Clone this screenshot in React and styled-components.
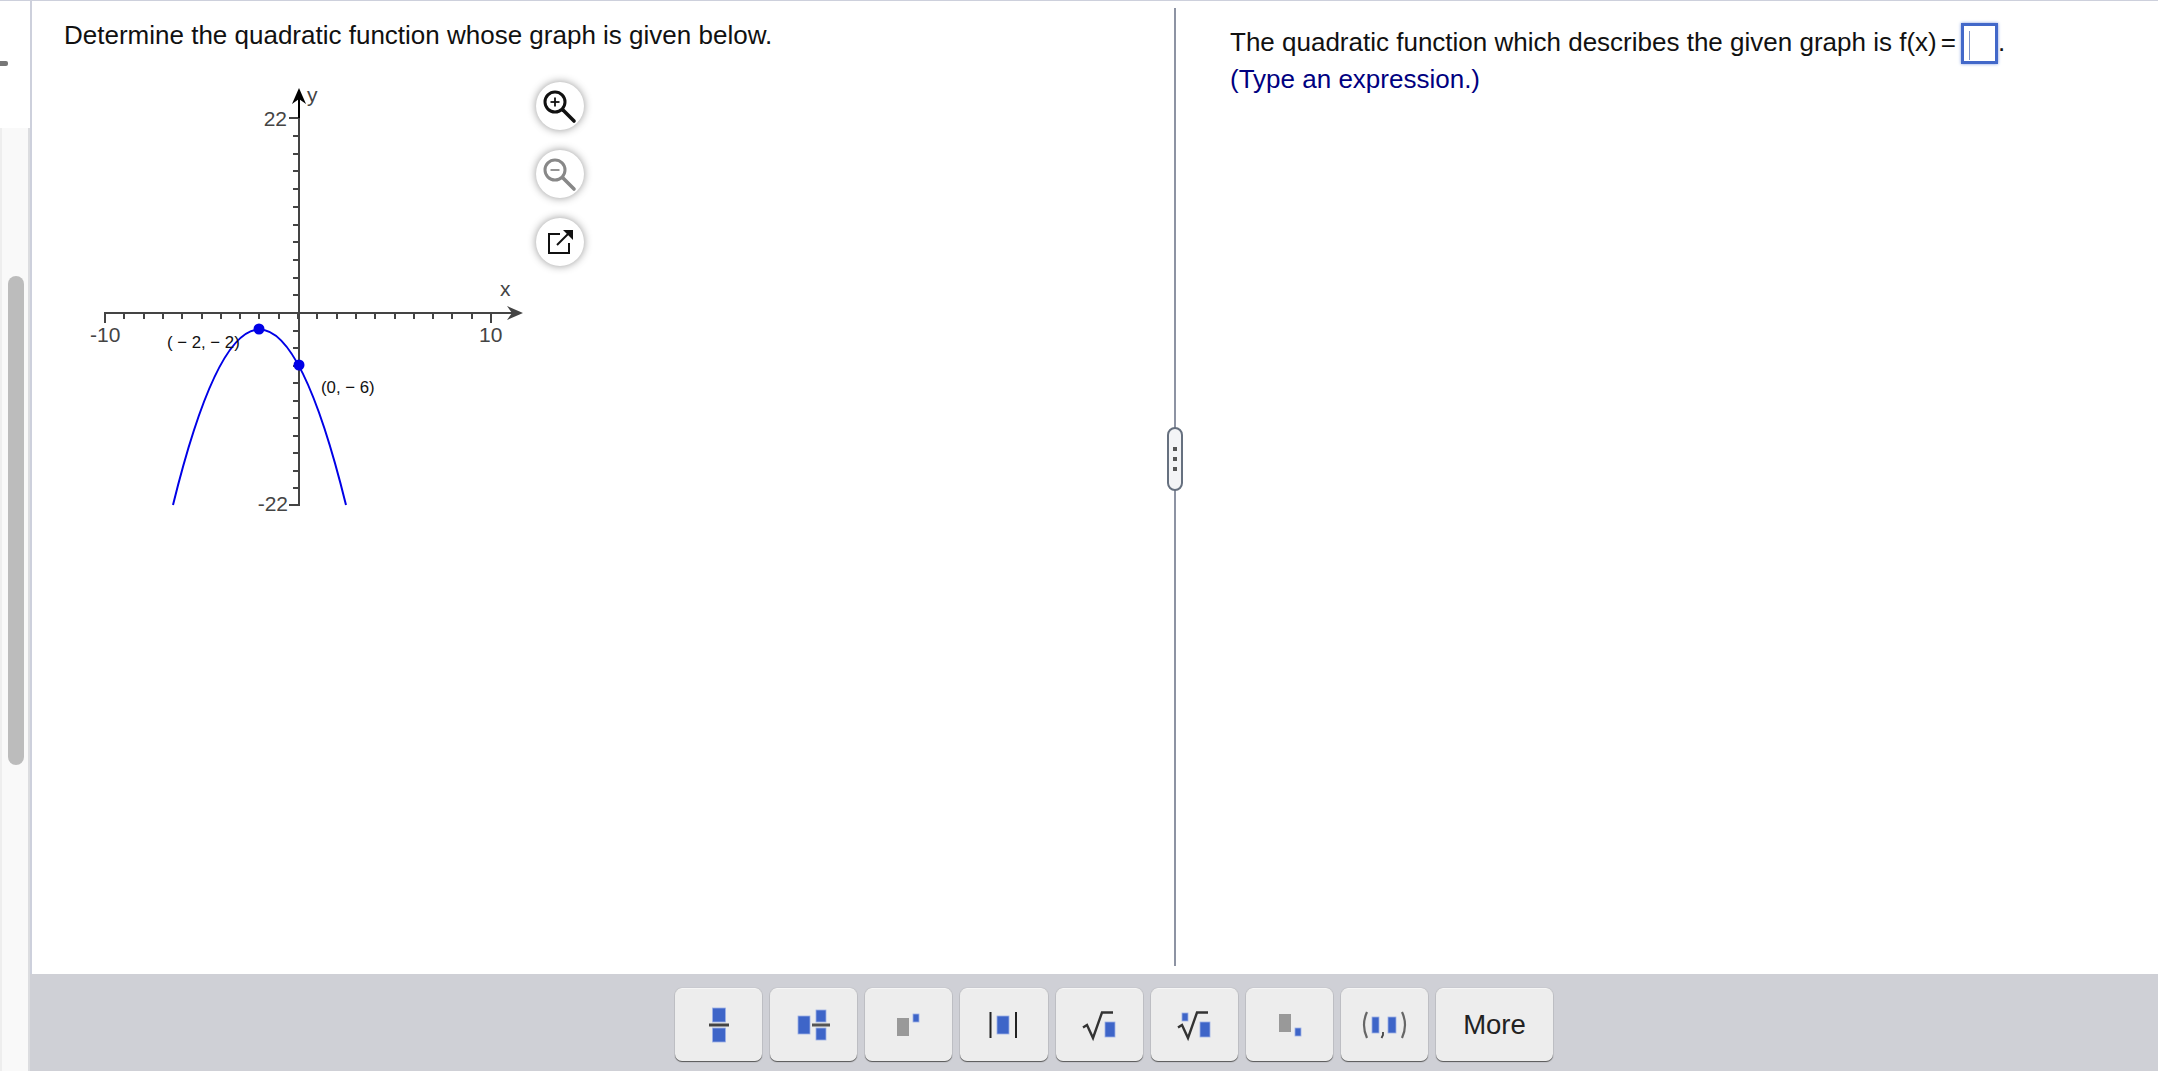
import React from "react";
import styled, { createGlobalStyle } from "styled-components";

const Global = createGlobalStyle`
  html, body { margin: 0; padding: 0; height: 100%; background: #fff; overflow: hidden; }
  #root { height: 100%; }
  * { box-sizing: border-box; }
`;

const Page = styled.div`
  display: flex;
  height: 1071px;
  width: 2158px;
  font-family: "Liberation Sans", Arial, sans-serif;
  color: #111;
`;
const Rail = styled.aside`
  width: 32px;
  flex: none;
  display: flex;
  flex-direction: column;
  border-right: 2px solid #cdd0dc;
`;
const RailHead = styled.div`
  height: 128px;
  flex: none;
  border-top: 1px solid #cdd0dc;
  padding-top: 60px;
`;
const Dash = styled.div`
  width: 8px;
  height: 5px;
  background: #777;
  border-radius: 0 2px 2px 0;
  filter: blur(0.5px);
`;
const Track = styled.div`
  flex: 1;
  background: #f9f9f9;
  border-left: 2px solid #eee;
  border-right: 2px solid #dcdde0;
  padding: 148px 0 0 6px;
`;
const Thumb = styled.div`
  width: 16px;
  height: 489px;
  border-radius: 8px;
  background: #bcbcbc;
`;
const Main = styled.main`
  flex: 1;
  min-width: 0;
  display: flex;
  flex-direction: column;
  border-top: 1px solid #cdd0dc;
`;
const Panes = styled.div`
  flex: 1;
  min-height: 0;
  display: flex;
  padding-top: 7px;
  padding-bottom: 8px;
`;
const LeftPane = styled.section`
  width: 1142px;
  flex: none;
  padding-left: 32px;
`;
const Question = styled.p`
  margin: 11px 0 0;
  font-size: 26px;
  line-height: 32px;
  color: #111;
`;
const GraphRow = styled.div`
  display: flex;
  margin-top: 23px;
`;
const Graph = styled.svg`
  display: block;
  width: 472px;
  height: 446px;
  flex: none;
`;
const Tools = styled.div`
  display: flex;
  flex-direction: column;
  gap: 20px;
  margin-top: 8px;
`;
const RoundTool = styled.button`
  width: 48px;
  height: 48px;
  padding: 0;
  border: 0;
  border-radius: 50%;
  background: #fff;
  box-shadow: 0 0 9px rgba(0, 0, 0, 0.42);
  display: flex;
  svg { display: block; }
`;
const Divider = styled.div`
  width: 2px;
  flex: none;
  background: #8d93a3;
  position: relative;
`;
const Handle = styled.div`
  position: absolute;
  left: -7px;
  top: 419px;
  width: 16px;
  height: 64px;
  border: 2px solid #66707f;
  border-radius: 8px;
  background: #f3f4f6;
  display: flex;
  flex-direction: column;
  align-items: center;
  justify-content: center;
  gap: 6px;
`;
const Dot = styled.span`
  width: 4px;
  height: 4px;
  background: #555;
`;
const RightPane = styled.section`
  flex: 1;
  padding: 13px 0 0 54px;
`;
const Statement = styled.p`
  margin: 0;
  font-size: 26px;
  line-height: 37px;
  display: flex;
  align-items: center;
`;
const Equals = styled.span`
  margin-left: 4px;
`;
const AnswerBox = styled.span`
  width: 37px;
  height: 41px;
  margin: 2px 0 0 5px;
  border: 3px solid #4268c9;
  box-shadow: 0 0 3px #7f9ae0;
  background: #fff;
  padding: 5px 0 0 5px;
  display: block;
`;
const Caret = styled.span`
  display: block;
  width: 1px;
  height: 29px;
  background: #7f94c8;
`;
const Hint = styled.p`
  margin: -3px 0 0;
  font-size: 26px;
  line-height: 37px;
  color: #000080;
`;
const Toolbar = styled.footer`
  height: 97px;
  flex: none;
  background: #cfd0d6;
  margin-left: -2px;
  padding: 14px 0 0 645px;
  display: flex;
  gap: 8px;
`;
const KeyButton = styled.button`
  width: ${(p) => p.$w || 87.125}px;
  height: 73px;
  padding: 0;
  border: 0;
  border-top: 1px solid #f6f6f6;
  border-radius: 7px;
  background: #ededed;
  box-shadow: 0 1px 1px #555, 0 0 1px rgba(0, 0, 0, 0.3);
  font-family: "Liberation Sans", Arial, sans-serif;
  font-size: 27.5px;
  color: #222;
  svg { display: block; margin-top: -1px; }
`;

const BLUE = "#3e65c8";
const Blue = (p) => <rect fill={BLUE} stroke="#9db1e6" strokeWidth="0.8" {...p} />;

const Icon = ({ children }) => (
  <svg width="87" height="73" viewBox="0 0 87 73">{children}</svg>
);

const Radical = () => (
  <path d="M27 39.5 L31 37 L37 50 L46 24.5 H57" fill="none" stroke="#333" strokeWidth="2.4" />
);

const icons = [
  <Icon key="f">
    <Blue x="37.5" y="20" width="13" height="14" />
    <rect x="34" y="35.5" width="20" height="3" fill="#444" />
    <Blue x="37.5" y="40" width="13" height="14" />
  </Icon>,
  <Icon key="m">
    <Blue x="28" y="28" width="12" height="18" />
    <Blue x="46" y="22" width="10" height="12" />
    <rect x="42" y="35.5" width="18" height="3" fill="#555" />
    <Blue x="46" y="40" width="10" height="12" />
  </Icon>,
  <Icon key="p">
    <rect x="32" y="30" width="12" height="18" fill="#999" />
    <Blue x="48" y="26" width="6" height="8" />
  </Icon>,
  <Icon key="a">
    <rect x="29.5" y="24" width="2" height="26" fill="#222" />
    <Blue x="37" y="28" width="12" height="18" />
    <rect x="55" y="24" width="2" height="26" fill="#222" />
  </Icon>,
  <Icon key="s">
    <Radical />
    <Blue x="49" y="34" width="10" height="15" />
  </Icon>,
  <Icon key="n">
    <Radical />
    <Blue x="31" y="25" width="6" height="8" />
    <Blue x="49" y="34" width="10" height="15" />
  </Icon>,
  <Icon key="b">
    <rect x="33" y="26" width="12" height="18" fill="#999" />
    <Blue x="49" y="40" width="6" height="8" />
  </Icon>,
  <Icon key="t">
    <path d="M26 24 Q20 37 26 50" fill="none" stroke="#666" strokeWidth="2.2" />
    <Blue x="31" y="29" width="7" height="16" />
    <path d="M42 44 L42 47 L40.5 50" fill="none" stroke="#444" strokeWidth="1.8" />
    <Blue x="47" y="29" width="8" height="16" />
    <path d="M61 24 Q67 37 61 50" fill="none" stroke="#666" strokeWidth="2.2" />
  </Icon>,
];

const AXIS = "#444";
const xTicks = Array.from({ length: 19 }, (_, i) => Math.round(105 + (i + 1) * 19.3));
const yTicks = [
  ...Array.from({ length: 10 }, (_, i) => Math.round(313 - (i + 1) * 17.7)),
  ...Array.from({ length: 10 }, (_, i) => Math.round(313 + (i + 1) * 17.5)),
];

const labelFont = { fontFamily: '"Liberation Sans", Arial, sans-serif' };

const QuadGraph = () => (
  <Graph viewBox="64 74 472 446" style={labelFont}>
    <g stroke={AXIS} strokeWidth="2" fill="none">
      <line x1="104" y1="313" x2="512" y2="313" />
      <line x1="299" y1="118" x2="299" y2="506" />
      <line x1="105" y1="313" x2="105" y2="323" />
      <line x1="491" y1="313" x2="491" y2="323" />
      <line x1="289" y1="118" x2="299" y2="118" />
      <line x1="289" y1="505" x2="299" y2="505" />
      {xTicks.map((x) => (
        <line key={x} x1={x} y1="313" x2={x} y2="319" />
      ))}
      {yTicks.map((y) => (
        <line key={y} x1="293" y1={y} x2="299" y2={y} />
      ))}
    </g>
    <line x1="299" y1="118" x2="299" y2="98" stroke="#000" strokeWidth="2" />
    <polygon points="299,88 306,104 299,99 292,104" fill="#000" />
    <polygon points="523,313 507,306 512,313 507,320" fill={AXIS} />
    <path d="M173 505 Q259.5 154 346 505" fill="none" stroke="#0000e6" strokeWidth="2" />
    <circle cx="259" cy="329" r="5.5" fill="#0000e6" />
    <circle cx="299" cy="365" r="5.5" fill="#0000e6" />
    <g fill={AXIS} fontSize="21">
      <text x="287" y="126" textAnchor="end">22</text>
      <text x="288" y="511" textAnchor="end">-22</text>
      <text x="90" y="342">-10</text>
      <text x="479" y="342">10</text>
      <text x="500" y="296">x</text>
      <text x="307" y="102">y</text>
    </g>
    <g fill="#111" fontSize="16.8">
      <text x="167" y="348">( − 2, − 2)</text>
      <text x="321" y="393">(0, − 6)</text>
    </g>
  </Graph>
);

const ZoomIcon = ({ color, plus }) => (
  <svg width="48" height="48" viewBox="0 0 48 48" fill="none" stroke={color}>
    <circle cx="19" cy="20" r="10" strokeWidth="3" />
    <line x1="27" y1="28" x2="38" y2="39" strokeWidth="3.6" strokeLinecap="round" />
    <line x1="14.5" y1="20" x2="23.5" y2="20" strokeWidth="1.8" />
    {plus && <line x1="19" y1="15.5" x2="19" y2="24.5" strokeWidth="1.8" />}
  </svg>
);

const ExternalIcon = () => (
  <svg width="48" height="48" viewBox="0 0 48 48" fill="none" stroke="#111">
    <path d="M24 16H13V35H33V25" strokeWidth="2" />
    <line x1="21" y1="27" x2="32" y2="16" strokeWidth="2" />
    <polygon points="27,12 37,12 37,22" fill="#111" stroke="none" />
  </svg>
);

export default function App() {
  return (
    <Page>
      <Global />
      <Rail>
        <RailHead>
          <Dash />
        </RailHead>
        <Track>
          <Thumb />
        </Track>
      </Rail>
      <Main>
        <Panes>
          <LeftPane>
            <Question>Determine the quadratic function whose graph is given below.</Question>
            <GraphRow>
              <QuadGraph />
              <Tools>
                <RoundTool aria-label="Zoom in"><ZoomIcon color="#111" plus /></RoundTool>
                <RoundTool aria-label="Zoom out"><ZoomIcon color="#888" /></RoundTool>
                <RoundTool aria-label="Open in new window"><ExternalIcon /></RoundTool>
              </Tools>
            </GraphRow>
          </LeftPane>
          <Divider>
            <Handle>
              <Dot />
              <Dot />
              <Dot />
            </Handle>
          </Divider>
          <RightPane>
            <Statement>
              The quadratic function which describes the given graph is f(x)
              <Equals>=</Equals>
              <AnswerBox>
                <Caret />
              </AnswerBox>
              .
            </Statement>
            <Hint>(Type an expression.)</Hint>
          </RightPane>
        </Panes>
        <Toolbar>
          {icons.map((icon) => (
            <KeyButton key={icon.key}>{icon}</KeyButton>
          ))}
          <KeyButton $w={117}>More</KeyButton>
        </Toolbar>
      </Main>
    </Page>
  );
}
